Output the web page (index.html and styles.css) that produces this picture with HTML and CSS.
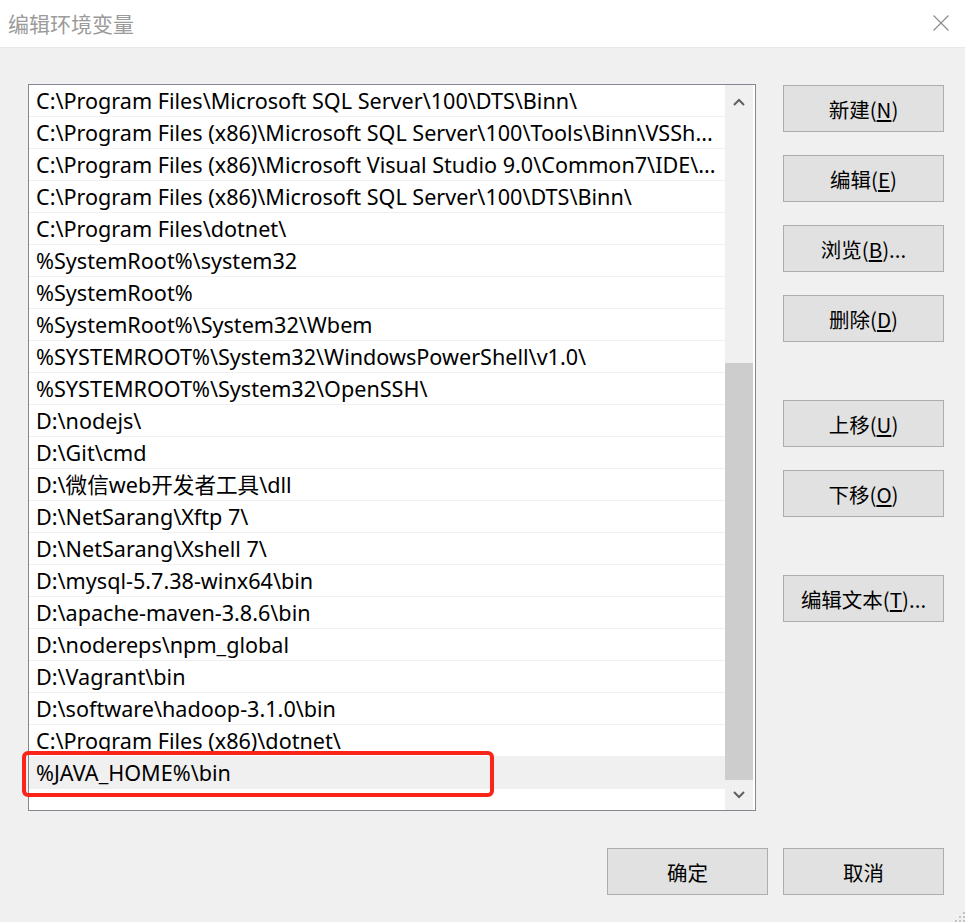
FILE: index.html
```
<!DOCTYPE html>
<html lang="zh-CN">
<head>
    <meta charset="UTF-8">
    <meta name="viewport" content="width=device-width, initial-scale=1.0">
    <title>编辑环境变量</title>
    <link rel="stylesheet" href="styles.css">
</head>
<body>
    <div class="dialog">
        <div class="title-bar">
            <span class="title">编辑环境变量</span>
            <svg class="close-icon" width="16" height="16" viewBox="0 0 16 16">
                <path d="M0.5 0.5 L15.5 15.5 M15.5 0.5 L0.5 15.5" stroke="#8a8a8a" stroke-width="1.1" fill="none"/>
            </svg>
        </div>

        <div class="content">
            <div class="main-row">
                <div class="path-list">
                    <div class="rows">
                        <div class="row">C:\Program Files\Microsoft SQL Server\100\DTS\Binn\</div>
                        <div class="row">C:\Program Files (x86)\Microsoft SQL Server\100\Tools\Binn\VSSh...</div>
                        <div class="row">C:\Program Files (x86)\Microsoft Visual Studio 9.0\Common7\IDE\...</div>
                        <div class="row">C:\Program Files (x86)\Microsoft SQL Server\100\DTS\Binn\</div>
                        <div class="row">C:\Program Files\dotnet\</div>
                        <div class="row">%SystemRoot%\system32</div>
                        <div class="row">%SystemRoot%</div>
                        <div class="row">%SystemRoot%\System32\Wbem</div>
                        <div class="row">%SYSTEMROOT%\System32\WindowsPowerShell\v1.0\</div>
                        <div class="row">%SYSTEMROOT%\System32\OpenSSH\</div>
                        <div class="row">D:\nodejs\</div>
                        <div class="row">D:\Git\cmd</div>
                        <div class="row">D:\微信web开发者工具\dll</div>
                        <div class="row">D:\NetSarang\Xftp 7\</div>
                        <div class="row">D:\NetSarang\Xshell 7\</div>
                        <div class="row">D:\mysql-5.7.38-winx64\bin</div>
                        <div class="row">D:\apache-maven-3.8.6\bin</div>
                        <div class="row">D:\nodereps\npm_global</div>
                        <div class="row">D:\Vagrant\bin</div>
                        <div class="row">D:\software\hadoop-3.1.0\bin</div>
                        <div class="row">C:\Program Files (x86)\dotnet\</div>
                        <div class="row selected">%JAVA_HOME%\bin</div>
                    </div>
                    <div class="scrollbar">
                        <div class="arrow">
                            <svg width="12" height="8" viewBox="0 0 12 8">
                                <path d="M1 7 L6 2 L11 7" stroke="#606060" stroke-width="2" fill="none"/>
                            </svg>
                        </div>
                        <div class="thumb"></div>
                        <div class="arrow arrow-down">
                            <svg width="12" height="8" viewBox="0 0 12 8">
                                <path d="M1 1 L6 6 L11 1" stroke="#606060" stroke-width="2" fill="none"/>
                            </svg>
                        </div>
                    </div>
                    <!-- red highlight drawn on top of the last entry -->
                    <div class="mark"></div>
                </div>

                <div class="side-buttons">
                    <button class="btn">新建(<u>N</u>)</button>
                    <button class="btn">编辑(<u>E</u>)</button>
                    <button class="btn">浏览(<u>B</u>)...</button>
                    <button class="btn">删除(<u>D</u>)</button>
                    <button class="btn group-start">上移(<u>U</u>)</button>
                    <button class="btn">下移(<u>O</u>)</button>
                    <button class="btn group-start">编辑文本(<u>T</u>)...</button>
                </div>
            </div>

            <div class="footer">
                <button class="btn">确定</button>
                <button class="btn">取消</button>
            </div>
        </div>

        <svg class="grip" width="12" height="12" viewBox="0 0 12 12">
            <rect x="10" y="2" width="2" height="2" fill="#c4c4c4"/>
            <rect x="6" y="6" width="2" height="2" fill="#c4c4c4"/>
            <rect x="10" y="6" width="2" height="2" fill="#c4c4c4"/>
            <rect x="2" y="10" width="2" height="2" fill="#c4c4c4"/>
            <rect x="6" y="10" width="2" height="2" fill="#c4c4c4"/>
            <rect x="10" y="10" width="2" height="2" fill="#c4c4c4"/>
        </svg>
    </div>
</body>
</html>
```

FILE: styles.css
```
body {
    margin: 0;
    background-color: #f0f0f0;
    font-family: "Noto Sans", "Noto Sans CJK SC", sans-serif;
    color: #000;
}

.dialog {
    position: relative;
    width: 965px;
    height: 922px;
    overflow: hidden;
}

.title-bar {
    height: 48px;
    background-color: #fff;
    display: flex;
    align-items: center;
    justify-content: space-between;
    padding: 0 16px 0 8px;
    border-bottom: 1px solid #e8e8e8;
    box-sizing: border-box;
}

.title {
    font-family: "Noto Sans CJK SC", sans-serif;
    font-size: 21px;
    color: #9b9b9b;
    margin-top: -2px;
}

.close-icon {
    margin-top: -2px;
}

.content {
    padding: 36px 21px 0 28px;
}

.main-row {
    display: flex;
    gap: 27px;
}

.path-list {
    position: relative;
    display: flex;
    width: 728px;
    height: 727px;
    box-sizing: border-box;
    border: 1px solid #828790;
    background-color: #fff;
}

.rows {
    width: 696px;
}

.row {
    height: 32px;
    box-sizing: border-box;
    border-bottom: 1px solid #f0f0f0;
    padding: 1px 0 0 7px;
    font-size: 21.6px;
    line-height: 30px;
    white-space: nowrap;
    overflow: hidden;
}

.row.selected {
    background-color: #f0f0f0;
}

.scrollbar {
    width: 28px;
    display: flex;
    flex-direction: column;
    background-color: #f0f0f0;
}

.arrow {
    height: 34px;
    display: flex;
    align-items: center;
    justify-content: center;
}

.arrow-down {
    height: 30px;
    margin-top: auto;
}

.thumb {
    margin-top: 244px;
    height: 417px;
    background-color: #cdcdcd;
}

.mark {
    position: absolute;
    left: -7px;
    top: 666px;
    width: 472px;
    height: 46px;
    box-sizing: border-box;
    border: 4px solid #fa2419;
    border-radius: 6px;
}

.side-buttons {
    display: flex;
    flex-direction: column;
    gap: 23px;
    padding-top: 1px;
}

.btn {
    width: 161px;
    height: 47px;
    box-sizing: border-box;
    background-color: #e1e1e1;
    border: 1px solid #adadad;
    font-family: "Noto Sans CJK SC", sans-serif;
    font-size: 20.5px;
    color: #000;
    padding: 0;
}

.btn u {
    text-underline-offset: 2px;
}

.side-buttons .group-start {
    margin-top: 35px;
}

.footer {
    display: flex;
    justify-content: flex-end;
    gap: 15px;
    margin-top: 37px;
}

.grip {
    position: absolute;
    right: 0;
    bottom: 0;
}
```
